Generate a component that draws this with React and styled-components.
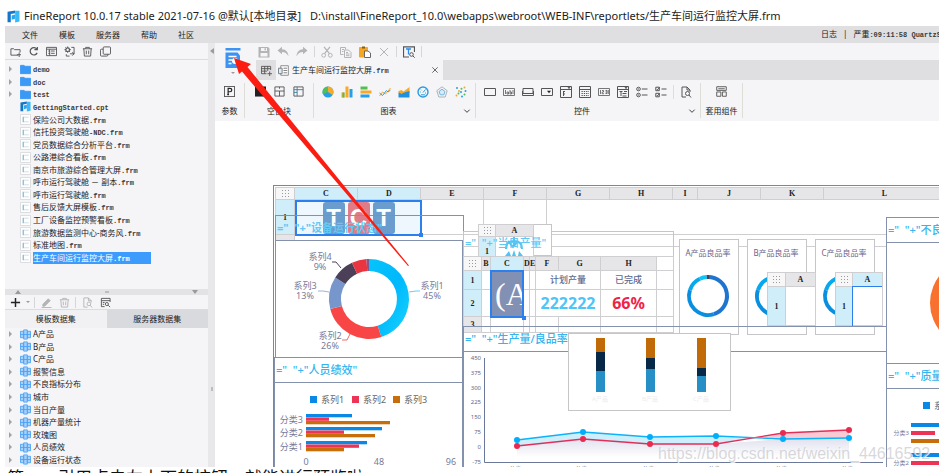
import React from "react";
import styled, { createGlobalStyle, css } from "styled-components";

const GlobalStyle = createGlobalStyle`
  * { box-sizing: border-box; }
  body { margin: 0; background: #fff; color: #222; font-family: "Noto Sans", "Noto Sans CJK SC", sans-serif; }
  button { border: 0; padding: 0; margin: 0; background: none; color: inherit; font: inherit; }
  ul { list-style: none; margin: 0; padding: 0; }
`;

/* ---------- frame ---------- */
const Page = styled.div`
  position: relative;
  display: flex;
  flex-direction: column;
  height: 100vh;
  overflow: hidden;
`;
const TitleBar = styled.header`
  display: flex;
  align-items: center;
  flex: none;
  height: 26px;
  padding: 6px 0 0 7px;
  font-size: 11px;
  line-height: 16px;
  color: #1c1c1c;
  white-space: nowrap;
`;
const AppName = styled.span`
  margin: 0 9px 0 4px;
`;
const MenuBar = styled.nav`
  display: flex;
  align-items: center;
  justify-content: space-between;
  flex: none;
  height: 17px;
  margin-left: 5px;
  padding-left: 17px;
  background: #dfdfe1;
  font-size: 8px;
  line-height: 12px;
  overflow: hidden;
`;
const MenuList = styled.div`
  display: flex;
  gap: 21px;
`;
const Status = styled.div`
  display: flex;
  gap: 6px;
  width: 118px;
  white-space: nowrap;
  overflow: hidden;
`;
const Body = styled.div`
  display: flex;
  flex: 1;
  min-height: 0;
  margin-left: 5px;
`;
const Caption = styled.p`
  flex: none;
  height: 6px;
  margin: 0;
  padding-left: 7px;
  overflow: hidden;
  font-size: 17px;
  line-height: 22px;
  color: #111;
  white-space: nowrap;
`;
const Mono = styled.span`
  font-family: "Liberation Mono", monospace;
  font-size: 7px;
  font-weight: 700;
  color: ${(p) => (p.$light ? "#fff" : "#3a3a3a")};
`;

/* ---------- sidebar ---------- */
const Sidebar = styled.aside`
  display: flex;
  flex-direction: column;
  flex: none;
  width: 203px;
  background: #f5f5f8;
  font-size: 8px;
  line-height: 12px;
`;
const SideTools = styled.div`
  display: flex;
  align-items: center;
  flex: none;
  gap: ${(p) => p.$gap || 6}px;
  height: ${(p) => p.$h}px;
  padding-left: 4px;
  border-bottom: 1px solid #dcdcdf;
  color: #444;
`;
const ToolButton = styled.button`
  display: flex;
  align-items: center;
  justify-content: center;
  flex: none;
  width: ${(p) => p.$w || 12}px;
  height: 14px;
  color: ${(p) => (p.$dim ? "#b4b4b6" : "#555")};
`;
const Tree = styled.ul`
  display: flex;
  flex-direction: column;
  flex: none;
  height: ${(p) => p.$h}px;
  margin-top: ${(p) => p.$top || 0}px;
`;
const TreeRow = styled.li`
  display: flex;
  align-items: center;
  flex: 1 1 0;
  min-height: 0;
  gap: 2px;
  padding-left: 4px;
  white-space: nowrap;
`;
const Twisty = styled.span`
  flex: none;
  width: 9px;
  height: 6px;
  &::before {
    content: "";
    display: block;
    width: 0;
    border: solid transparent;
    border-width: 3px 0 3px 3px;
    border-left-color: ${(p) => (p.$open ? "#a2a2a6" : "transparent")};
  }
`;
const TreeLabel = styled.span`
  flex: none;
  height: 12px;
  line-height: 12px;
  ${(p) =>
    p.$selected &&
    css`
      width: 118px;
      color: #fff;
      background: #3c9bfd;
    `}
`;
const SideSplit = styled.div`
  display: flex;
  align-items: center;
  justify-content: space-between;
  flex: none;
  height: 6px;
  margin-top: auto;
  padding: 0 10px;
  background: #e3e3e5;
`;
const Triangle = styled.span`
  width: 0;
  border: solid transparent;
  ${(p) => p.$dir === "up" && "border-width: 0 3px 4px; border-bottom-color: #9a9a9e;"}
  ${(p) => p.$dir === "down" && "border-width: 4px 3px 0; border-top-color: #9a9a9e;"}
  ${(p) => p.$dir === "drop" && "border-width: 2px 2px 0; border-top-color: #9a9a9e;"}
  ${(p) => p.$dir === "left" && "border-width: 3px 4px 3px 0; border-right-color: #9a9a9e;"}
`;
const Grip = styled.span`
  width: ${(p) => (p.$tall ? 2 : 4)}px;
  height: ${(p) => (p.$tall ? 4 : 2)}px;
  background: #bdbdc1;
`;
const DataTabs = styled.div`
  display: flex;
  flex: none;
  height: 18px;
`;
const DataTab = styled.button`
  flex: 1;
  background: ${(p) => (p.$active ? "#f1f1f3" : "#d9dadd")};
`;
const SideBottom = styled.div`
  flex: none;
  height: 172px;
`;
const Splitter = styled.div`
  display: flex;
  flex-direction: column;
  align-items: center;
  flex: none;
  width: 7px;
  padding: 5px 0 76px;
  justify-content: space-between;
  background: #e8e8ea;
`;

/* ---------- ribbon ---------- */
const Main = styled.main`
  display: flex;
  flex-direction: column;
  flex: 1;
  min-width: 0;
`;
const TopRow = styled.div`
  display: flex;
  flex: none;
  height: 37px;
  background: #f5f5f8;
`;
const PreviewButton = styled.button`
  display: flex;
  flex-direction: column;
  align-items: center;
  gap: 4px;
  width: 36px;
  padding-top: 5px;
`;
const TopColumn = styled.div`
  display: flex;
  flex-direction: column;
  flex: 1;
  min-width: 0;
`;
const QuickBar = styled.div`
  display: flex;
  align-items: center;
  height: 17px;
  gap: 5px;
  padding-left: 6px;
`;
const Rule = styled.span`
  flex: none;
  align-self: center;
  width: 1px;
  height: ${(p) => p.$h || 11}px;
  background: ${(p) => (p.$warm ? "#dfded6" : "#d6d6da")};
`;
const TabStrip = styled.div`
  display: flex;
  height: 20px;
  margin-left: 5px;
  background: #dfdfe1;
`;
const NewTab = styled.button`
  display: flex;
  align-items: center;
  justify-content: center;
  width: 20px;
`;
const FileTab = styled.div`
  display: flex;
  align-items: center;
  gap: 3px;
  width: 167px;
  padding: 0 4px 0 2px;
  background: #f5f5f8;
  font-size: 8px;
  line-height: 12px;
  white-space: nowrap;
`;
const CloseTab = styled.button`
  display: flex;
  margin-left: auto;
`;
const Ribbon = styled.div`
  display: flex;
  flex: none;
  height: 41px;
  padding-top: 3px;
  background: #f5f5f8;
  font-size: 8px;
  line-height: 12px;
`;
const Group = styled.section`
  display: grid;
  grid-template-rows: 17px 18px;
  align-items: center;
  align-content: start;
  flex: none;
  width: ${(p) => p.$w}px;
  height: 35px;
  border-right: 1px solid #dfded6;
`;
const GroupIcons = styled.div`
  display: flex;
  align-items: center;
  justify-content: center;
  gap: ${(p) => p.$gap || 5}px;
`;
const GroupFoot = styled.div`
  display: flex;
  align-items: center;
  padding-top: 4px;
  & > span {
    flex: 1;
    text-align: center;
    white-space: nowrap;
  }
  & > svg {
    flex: none;
    margin-right: 4px;
  }
`;

/* ---------- design canvas ---------- */
const Workspace = styled.div`
  display: flex;
  flex: 1;
  min-height: 0;
  padding: 64px 0 0 58px;
  background: #fff;
  overflow: hidden;
`;
const Stage = styled.div`
  position: relative;
  flex: 1;
  border: solid #3c93f8;
  border-width: 1px 0 0 1px;
  overflow: hidden;
`;
/* Widgets carry form coordinates; the form's own origin is 274 / 186. */
const Item = styled.div`
  position: absolute;
  left: ${(p) => p.$x - 274}px;
  top: ${(p) => p.$y - 186}px;
  width: ${(p) => p.$w}px;
  height: ${(p) => p.$h}px;
`;
const Frame = styled(Item)`
  border: 1px solid ${(p) => (p.$grey ? "#c6c6c8" : "#8391ad")};
  background: ${(p) => (p.$clear ? "transparent" : "#fff")};
`;
const WidgetTitle = styled(Item)`
  display: flex;
  align-items: center;
  padding-left: 1px;
  border: 1px solid #8391ad;
  background: ${(p) => (p.$clear ? "transparent" : "#fff")};
  color: ${(p) => (p.$pale ? "#62c8f4" : "#35b4ef")};
  font-size: 11px;
  font-weight: ${(p) => (p.$pale ? 700 : 500)};
  line-height: 16px;
  white-space: pre;
  overflow: hidden;
`;
const FloatText = styled(Item)`
  color: #5fc8f5;
  font-size: 11px;
  font-weight: 500;
  line-height: 16px;
  white-space: pre;
`;
const Chart = styled.svg`
  position: absolute;
  left: ${(p) => p.$x - 274}px;
  top: ${(p) => p.$y - 186}px;
  display: block;
  overflow: hidden;
  font-size: 9px;
`;
const SheetTable = styled.table`
  position: absolute;
  left: ${(p) => p.$x - 274}px;
  top: ${(p) => p.$y - 186}px;
  width: ${(p) => p.$w}px;
  table-layout: fixed;
  border-spacing: 0;
  border: solid #cfcfd1;
  border-width: 1px 0 0 1px;
  background: #fff;
  font-family: "Liberation Serif", serif;
  font-size: 8px;
  line-height: 9px;
  th, td {
    height: ${(p) => p.$head}px;
    padding: 0;
    border: solid #cfcfd1;
    border-width: 0 1px 1px 0;
    text-align: center;
  }
`;
const HeadCell = styled.th`
  background: ${(p) => (p.$active ? "#cfeefa" : p.$plain ? "#fff" : "#e6e6e8")};
`;
const CornerCell = styled.td`
  background: #f7f7f8;
  line-height: 0;
`;
const RowHead = styled.th`
  && { height: ${(p) => p.$h}px; }
  background: ${(p) => (p.$active ? "#cfeefa" : "#e6e6e8")};
`;
const Cell = styled.td`
  && {
    font-family: "Noto Sans", "Noto Sans CJK SC", sans-serif;
    font-size: ${(p) => p.$size || 9}px;
    font-weight: ${(p) => (p.$size ? 700 : 500)};
    line-height: 14px;
    color: ${(p) => p.$color || "#5d6a90"};
  }
`;
const Selection = styled(Item)`
  display: flex;
  align-items: center;
  justify-content: center;
  gap: 3px;
  border: 2px solid #2b80ee;
  background: ${(p) => p.$bg || "transparent"};
`;
const Handle = styled(Item)`
  background: #2b80ee;
`;
const LogoTile = styled.span`
  width: 22px;
  height: 32px;
  border-radius: 3px;
  background: ${(p) => (p.$red ? "#de7c88" : "#6a9ccd")};
  color: #fff;
  font: 700 24px/32px "Liberation Sans", sans-serif;
  text-align: center;
`;
const ImageGlyph = styled.span`
  align-self: center;
  margin-left: 3px;
  color: #fff;
  font: 32px/40px "Liberation Serif", serif;
`;
const ImageCell = styled(Selection)`
  justify-content: flex-start;
  background: #8290b4;
  overflow: hidden;
`;
const Watermark = styled(Item)`
  font: 16px/20px "Liberation Sans", sans-serif;
  color: rgba(190, 190, 196, 0.6);
  text-shadow: 1px 1px 0 rgba(255, 255, 255, 0.8);
  white-space: nowrap;
`;
const Annotation = styled.svg`
  position: absolute;
  left: 0;
  top: 0;
  pointer-events: none;
`;

/* ---------- icons ---------- */
const Svg = ({ s = 12, children, ...rest }) => (
  <svg width={s} height={s} viewBox="0 0 12 12" fill="none" stroke="currentColor" strokeWidth="1" aria-hidden="true" {...rest}>
    {children}
  </svg>
);
const icons = {
  newFolder: <><path d="M9 10H1V3h3l1 1h6v3" /><path d="M10 7v5M7.5 9.5H12" /></>,
  refresh: <path d="M9.6 3.4A4 4 0 1 0 10 7.5M10.2 1v3H7" strokeWidth="1.3" />,
  list: <><path d="M.5 1.5h11v9H.5zM.5 3.5h11M2.5 5.5h2M2.5 8h2M5.5 5.5h4M5.5 8h4M4 3.5v7" /></>,
  gearBox: <><circle cx="4" cy="4" r="2" strokeWidth="1.3" /><path d="M4 .5v1.500M4 6v1.500M.5 4H2M6 4h1.500M1.500 1.500l1 1M5.500 5.500l1 1M1.500 6.500l1-1M8 1.500h3v7M2.500 9v2H6M6.500 8.500h4.500M9 6.800l2 1.700-2 2" /></>,
  trash: <path d="M1 3h10M4 3V1.5h4V3M2 3l.6 8h6.800L10 3M4.700 5v4M7.300 5v4" />,
  copy: <><rect x="3.500" y="1" width="8" height="8" rx="1" /><path d="M3.500 3.500H1.500q-1 0-1 1v5.500q0 1 1 1h6q1 0 1-1V9" /></>,
  plus: <path d="M6 1v10M1 6h10" stroke="#222" strokeWidth="1.6" />,
  pencil: <path d="M2 8l6-6 2 2-6 6H2zM.5 11.500h11" fill="currentColor" />,
  docSearch: <><path d="M6 11H2V1h5l3 3v2M7 1v3h3" /><circle cx="7.500" cy="7.500" r="2" /><path d="M9 9l2 2.500" /></>,
  preview: <><path d="M5 10.500H1.500v-9h9.500v4M1.500 4h9.500M3 6h2M3 8h1.500" /><circle cx="7.500" cy="7.700" r="1.700" /><path d="M9 9l2 2" /></>,
  save: <path fill="currentColor" fillRule="evenodd" stroke="none" d="M1 1h9l1.500 1.500V11.500H.500V1zM3 2v3h6V2zM2.500 7v3.500h7V7zM6.500 2.300h1.500v2H6.500z" />,
  undo: <path fill="currentColor" stroke="none" d="M.500 4.500L5 .800V3.300c4 .2 6.200 3 6.500 7C10 7.500 8 6 5 6v2.300z" />,
  redo: <path fill="currentColor" stroke="none" d="M11.500 4.500L7 .800V3.300C3 3.500.800 6.300.500 10.300 2 7.500 4 6 7 6v2.300z" />,
  cut: <><circle cx="2.700" cy="9.300" r="1.900" /><circle cx="9.300" cy="9.300" r="1.900" /><path d="M3.500 7.600L9 .8M8.500 7.600L3 .8" strokeWidth="1.300" /></>,
  copyDocs: <><path d="M.5 1.500h5v2M.5 1.500v7h3M2 3.500h2M2 5.500h1.500" /><path d="M4.500 4h4l2.500 2.500V11.500H4.500zM6 6.500h2M6 8h3.500M6 9.700h3.500" /></>,
  paste: <><path d="M.5 1.500h8V5H5v6H.5z" fill="#f5a623" stroke="#f5a623" /><path d="M3 .500h3v2H3z" fill="#8a5a10" stroke="none" /><path d="M5.500 5h3.500l2.500 2v4.500h-6z" fill="#fff" stroke="#666" /></>,
  close: <path d="M2 2l8 8M10 2l-8 8" />,
  textView: <><path d="M6 11H.500V.800h11V6" stroke="#555" strokeWidth="1.200" /><path d="M3 3h5M5.500 3v5.500" stroke="#2a8ce8" strokeWidth="1.300" /><circle cx="8.500" cy="8.500" r="1.800" stroke="#555" /><path d="M10 10l1.700 1.700" stroke="#555" /></>,
  gridPlus: <path d="M.500 1.500h10v4M.500 1.500v8H6M.500 4h10M.500 6.700h6M4 1.500v8M7.300 1.500v5M9.500 7v5M7 9.500h5" stroke="#555" />,
  report: <><path d="M3 .800h8.300v10.400H3z" fill="#fff" stroke="#888" /><path d="M.500 3.500h4v6h-4z" fill="#d9ecfb" stroke="#777" /><path d="M6 3.500h4M6 6h4M6 8.500h4" stroke="#777" /></>,
  param: <><rect x=".500" y=".500" width="11" height="11" /><path d="M4.500 9.500v-7h2q2 0 2 1.900t-2 1.900h-2M3.500 9.500h2" stroke="#222" strokeWidth="1.300" /></>,
  black: <rect width="12" height="11" y=".500" fill="#222" stroke="none" />,
  split: <path d="M1 1h10v10H1zM1 5.500h10M6 5.500V11M6 1v2" />,
  table: <><path d="M1 1h10v10H1z" /><path d="M1 4h10M4.500 1v10M1 7h3.500" stroke="#3a7f9e" /></>,
  pie: <><circle cx="6" cy="6" r="5.500" fill="#23a0e8" stroke="none" /><path d="M6 6V.500a5.500 5.500 0 0 1 4.500 8.600z" fill="#f7a928" stroke="none" /><path d="M6 6L.900 8A5.500 5.500 0 0 1 6 .500z" fill="#52bf54" stroke="none" /></>,
  column: <g stroke="none"><path d="M.500 6.500h3v5h-3z" fill="#f7a928" /><path d="M4.500 .500h3v11h-3z" fill="#f7a928" /><path d="M1.500 6.500h2v5h-2z" fill="#52bf54" /><path d="M8.500 3h3v8.500h-3z" fill="#23a0e8" /></g>,
  barH: <g stroke="none"><path d="M.500 .500h7v3h-7z" fill="#52bf54" /><path d="M.500 4.500h11v3H.500z" fill="#f7a928" /><path d="M.500 8.500h9v3h-9z" fill="#23a0e8" /></g>,
  line: <><path d="M.500 10l3-4 3 2 5-6" stroke="#f7a928" /><path d="M.500 7l3 2.500 4-5 1.500 1.500L11.500 4" stroke="#23a0e8" /></>,
  area: <g stroke="none"><path d="M.500 5l3-1 2 1.500L11.500 1v6H.500z" fill="#f7a928" /><path d="M.500 11.500V6.500l3 1 3-1 5-1.500v6.500z" fill="#2190dc" /></g>,
  gauge: <><circle cx="6" cy="6" r="5" stroke="#2a9be0" strokeWidth="1.400" /><path d="M6 6.500L8.500 3.500M3 6h.800M9 7h-1M4 3.700l.6.600M4 8.800h4" stroke="#2a9be0" /></>,
  radar: <><path d="M6 .800l5.200 3.900-2 6.300H2.800l-2-6.300z" stroke="#a7b4bd" /><path d="M6 3.200l3 2.300-1.200 3.300H4.300L3 5.500z" stroke="#6fb5de" fill="#d6ebf7" /></>,
  scatter: <g stroke="none"><g fill="#23a0e8"><circle cx="2" cy="2" r="1" /><circle cx="6" cy="6" r="1" /><circle cx="10.500" cy="5" r="1" /><circle cx="7" cy="10.500" r="1" /></g><g fill="#f7a928"><circle cx="9.500" cy="1.500" r="1" /><circle cx="1.500" cy="9.500" r="1" /><circle cx="4" cy="5" r="1" /></g><g fill="#52bf54"><circle cx="3.500" cy="7.500" r="1" /><circle cx="9.500" cy="8.500" r="1" /><circle cx="6.500" cy="2.800" r="1" /></g></g>,
  box: <path d="M.500 2.500h11v7H.500z" />,
  label: <path d="M.500 2.500h11v7H.500zM2.500 4v4M4 8V6h1.500v2H4M7 4v4h1.500V6H7M10 4v4" strokeWidth=".800" />,
  button: <path d="M1 2.500h10v5H1zM.500 5v4.500h11V5" />,
  combo: <><path d="M.500 2.500h11v7H.500z" /><path d="M6 4.800h4L8 7.300z" fill="#222" stroke="none" /></>,
  tree: <><path d="M.500 .500h11v11H.500zM.500 3.500h11M3.500 5v5M3 5.500h2M3 8h2" /><path d="M7.500 1.300h3L9 3z" fill="#333" stroke="none" /></>,
  calendar: <><path d="M.500 .500h11v11H.500zM.500 3.500h11" /><path d="M2.500 5.500h7.500M2.500 7.500h7.500M2.500 9.500h7.500" strokeDasharray="1.300 1" /></>,
  number: <path d="M.500 2.500h11v7H.500zM2.500 4v4M4 4.500h1.500V6H4.200v1.700H6M7.500 4.500H9v3H7.500M7.500 6H9M10.300 4v4" strokeWidth=".800" />,
  dropTree: <><path d="M.500 .500h11v11H.500zM.500 3.500h11M2.500 5.500h3M4 5.500v4.500M5.500 7.500h4M5.500 10h4M7 5.500h3" /><path d="M7.500 1.300h3L9 3z" fill="#333" stroke="none" /></>,
  radios: <><circle cx="2.500" cy="3" r="1.800" /><circle cx="2.500" cy="9" r="1.800" /><path d="M2 3h1M2 9h1M5.800 3H11.500M5.800 9H11.500" /></>,
  checks: <path d="M.800 1.200h3.500v3.500H.800zM.800 7.300h3.500v3.500H.800zM1.800 3l.8.800 2-2.500M1.800 9l.8.800 2-2.500M6.500 3h5M6.500 9h5" />,
  blocks: <path d="M.800 .800h10.400v4H.800zM.800 6.500h4.500v4.700H.800zM7 6.500h4.200v4.700H7zM2.500 3h7" />,
  chevron: <path d="M2 4l4 4 4-4" strokeWidth="1.300" />,
  folder: <path d="M.500 1.500h4l1 1h6v8h-11z" fill="#3c98f5" stroke="#3c98f5" />,
  form: <><path d="M.500 .500h11v11H.500z" fill="#fff" stroke="#d9d9dc" /><path d="M3.500 3v6" stroke="#4da0c8" /><path d="M4.500 3.500h5M4.500 8.500h5" stroke="#c9dbe6" /></>,
  dataset: <><path d="M.500 2.500h3.500v7H.500zM8 2.500h3.500v7H8zM4 1h4v10H4z" fill="#a9d2fb" stroke="#4ea3f6" /><path d="M.500 6h11" stroke="#4ea3f6" /></>,
};
const Icon = ({ n, s }) => <Svg s={s}>{icons[n]}</Svg>;

const Logo = ({ s }) => (
  <svg width={s} height={s} viewBox="0 0 12 12" aria-hidden="true">
    <path d="M.5 1.500L7.500.500v2.500L3.500 3.800v7.400H.500z" fill="#1376c8" />
    <path d="M4.300 5l3.200-.8V8L4.300 9z" fill="#2aa6ea" />
    <path d="M7.500 .800h4v9.700l-4 1z" fill="#39b9f5" />
  </svg>
);
const PreviewIcon = () => (
  <svg width="16" height="20" viewBox="0 0 16 20" aria-hidden="true">
    <path d="M.500 0h15v2.500H.500z" fill="#3c93f2" />
    <path d="M.500 4.500h12l2.500 3V20H.500z" fill="#3c93f2" />
    <path d="M3.500 8.500h8M3.500 12h4M3.500 15.500h3" stroke="#fff" strokeWidth="1.300" />
    <circle cx="10" cy="13" r="3" fill="#fff" />
  </svg>
);

/* ---------- data ---------- */
const files = [
  { icon: "folder", latin: "demo", open: true },
  { icon: "folder", latin: "doc", open: true },
  { icon: "folder", latin: "test", open: true },
  { icon: "logo", latin: "GettingStarted.cpt" },
  { name: "保险公司大数据", latin: ".frm" },
  { name: "信托投资驾驶舱", latin: "-NDC.frm" },
  { name: "党员数据综合分析平台", latin: ".frm" },
  { name: "公路港综合看板", latin: ".frm" },
  { name: "南京市旅游综合管理大屏", latin: ".frm" },
  { name: "呼市运行驾驶舱 － 副本", latin: ".frm" },
  { name: "呼市运行驾驶舱", latin: ".frm" },
  { name: "售后反馈大屏模板", latin: ".frm" },
  { name: "工厂设备监控预警看板", latin: ".frm" },
  { name: "旅游数据监测中心-商务风", latin: ".frm" },
  { name: "标准地图", latin: ".frm" },
  { name: "生产车间运行监控大屏", latin: ".frm", selected: true },
];
const datasets = ["A产品", "B产品", "C产品", "报警信息", "不良指标分布", "城市", "当日产量", "机器产量统计", "玫瑰图", "人员绩效", "设备运行状态"];
const quick = [
  ["save", "保存"], ["undo", "撤销"], ["redo", "重做"], null,
  ["cut", "剪切"], ["copyDocs", "复制"], ["paste", "粘贴"], ["close", "删除"], null,
  ["textView", "查看"], null,
];
const chartIcons = ["pie", "column", "barH", "line", "area", "gauge", "radar", "scatter"];
const controlIcons = ["box", "label", "button", "combo", "tree", "calendar", "number", "dropTree", "radios", "checks"];

/* ---------- sheets ---------- */
const Dots = () => (
  <svg width="9" height="7" viewBox="0 0 9 7" fill="#9a9a9e" aria-hidden="true">
    {[0, 3, 6].map((x) => [0, 3, 6].map((y) => <rect key={x + "-" + y} x={x + 1} y={y} width="1" height="1" />))}
  </svg>
);
function Sheet({ x, y, corner, head, cols, rows }) {
  const width = corner + cols.reduce((sum, c) => sum + c.w, 0);
  return (
    <SheetTable $x={x} $y={y} $w={width} $head={head}>
      <colgroup>
        <col width={corner} />
        {cols.map((c, i) => <col key={i} width={c.w} />)}
      </colgroup>
      <thead>
        <tr>
          <CornerCell><Dots /></CornerCell>
          {cols.map((c, i) => <HeadCell key={i} $active={c.active} $plain={!c.label}>{c.label}</HeadCell>)}
        </tr>
      </thead>
      <tbody>
        {rows.map((r) => (
          <tr key={r.label}>
            <RowHead $h={r.h} $active={r.active}>{r.label}</RowHead>
            {(r.cells || cols.map(() => ({}))).map((c, i) => (
              <Cell key={i} colSpan={c.span} $size={c.size} $color={c.color}>{c.text}</Cell>
            ))}
          </tr>
        ))}
      </tbody>
    </SheetTable>
  );
}

/* ---------- charts ---------- */
const arc = (cx, cy, ro, ri, from, to) => {
  const pt = (r, a) => `${cx + r * Math.sin(a * 2 * Math.PI)} ${cy - r * Math.cos(a * 2 * Math.PI)}`;
  const big = to - from > 0.5 ? 1 : 0;
  return `M${pt(ro, from)}A${ro} ${ro} 0 ${big} 1 ${pt(ro, to)}L${pt(ri, to)}A${ri} ${ri} 0 ${big} 0 ${pt(ri, from)}Z`;
};
const ChartBox = ({ x, y, w, h, children }) => (
  <Chart $x={x} $y={y} width={w} height={h} viewBox={`${x} ${y} ${w} ${h}`}>{children}</Chart>
);
const donut = [
  [0, 0.45, "url(#cyanRing)"], [0.45, 0.71, "#f84646"], [0.71, 0.84, "#7797cc"],
  [0.84, 0.93, "#4c4059"], [0.93, 0.99, "#e93540"], [0.99, 1, "#7d5a96"],
];
const donutLabels = [
  [320, 260, "系列4", "9%"], [305, 289, "系列3", "13%"], [432, 289, "系列1", "45%"], [330, 339, "系列2", "26%"],
];
function DonutChart() {
  return (
    <ChartBox x={276} y={242} w={186} h={114}>
      <defs>
        <linearGradient id="cyanRing" x1="0" y1="0" x2="1" y2="1">
          <stop offset="0" stopColor="#06c4fb" /><stop offset="0.5" stopColor="#00b8fc" /><stop offset="1" stopColor="#18d4ff" />
        </linearGradient>
      </defs>
      {donut.map(([a, b, c]) => <path key={a} d={arc(369, 299, 40, 28, a, b)} fill={c} />)}
      <g fill="none">
        <path d="M341 268l-5-6h-4" stroke="#4c4059" />
        <path d="M329 292l-6-1h-5" stroke="#9db2da" />
        <path d="M409 292l7-1h4" stroke="#62cff5" />
        <path d="M350 334l-3 6h-5" stroke="#f26a6a" />
      </g>
      <g fill="#777b9b" textAnchor="middle">
        {donutLabels.map(([x, y, name, pct]) => (
          <React.Fragment key={name}><text x={x} y={y}>{name}</text><text x={x} y={y + 10}>{pct}</text></React.Fragment>
        ))}
      </g>
    </ChartBox>
  );
}
const series = ["#0a88e6", "#ee3455", "#c76d0a"];
const staff = [["分类3", 414, [46, 23, 84]], ["分类2", 427, [76, 38, 69]], ["分类1", 441, [61, 53, 38]]];
function StaffChart() {
  return (
    <ChartBox x={275} y={383} w={186} h={90}>
      {[310, 352, 393].map((x, i) => (
        <g key={x}>
          <rect x={x} y="396" width="7" height="7" fill={series[i]} />
          <text x={x + 11} y="403" fill="#666">{"系列" + (i + 1)}</text>
        </g>
      ))}
      {staff.map(([name, y, values]) => (
        <g key={name}>
          <text x="303" y={y + 9} textAnchor="end" fill="#777b9b">{name}</text>
          {values.map((v, i) => <rect key={i} x="306" y={y + i * 3.500} width={v} height="3.300" fill={series[i]} />)}
        </g>
      ))}
      <g fill="#777b9b" textAnchor="middle">
        <text x="306" y="465">0</text><text x="379" y="465">48</text><text x="451" y="465">96</text>
      </g>
    </ChartBox>
  );
}
const xs = [517, 583, 650, 716, 783, 849];
const blueY = [440, 432, 437, 436, 439, 438];
const redY = [446, 439, 444, 444, 433, 430];
const ticks = [450, 375, 300, 225, 150, 75, 0, -75];
const join = (ys) => xs.map((x, i) => `${x},${ys[i]}`).join(" ");
function OutputChart() {
  return (
    <ChartBox x={465} y={353} w={421} h={120}>
      <defs>
        <linearGradient id="fade" x1="0" y1="0" x2="0" y2="1">
          <stop offset="0" stopColor="#dfe0ee" /><stop offset="0.8" stopColor="#fff" />
        </linearGradient>
      </defs>
      <polygon points={`${join(redY.map((y, i) => Math.max(y, blueY[i])))} 849,462 517,462`} fill="url(#fade)" />
      <polygon points="517,440 583,432 650,437 716,436 751,438 716,444 650,444 583,439 517,446" fill="#cdeefb" />
      <polygon points="751,438 783,433 849,430 849,438 783,439" fill="#fbc9d3" />
      <g fill="none" strokeWidth="1.300">
        <polyline points={join(redY)} stroke="#e22f58" />
        <polyline points={join(blueY)} stroke="#0db2fb" />
      </g>
      {xs.map((x, i) => (
        <g key={x}>
          <circle cx={x} cy={redY[i]} r="3" fill="#ea2a50" /><circle cx={x} cy={blueY[i]} r="3" fill="#00aefb" />
        </g>
      ))}
      <path d="M484.500 358v104.500H883" fill="none" stroke="#6c7899" />
      <g fill="#5f6787" fontSize="6" textAnchor="end">
        {ticks.map((t, i) => <text key={t} x="481" y={360 + i * 14.800}>{t}</text>)}
      </g>
      <g fill="#5f6787" fontSize="6" textAnchor="middle">
        {xs.map((x, i) => <text key={x} x={x} y="471">{"分类" + (i + 1)}</text>)}
      </g>
    </ChartBox>
  );
}
const stacks = [[596, 338, 352, 371], [646, 338, 358, 369], [697, 338, 368, 376]];
function StackChart() {
  return (
    <ChartBox x={570} y={335} w={159} h={74}>
      {stacks.map(([x, a, b, c], i) => (
        <g key={x}>
          <rect x={x} y={a} width="9" height={b - a} fill="#c06b08" />
          <rect x={x} y={b} width="9" height={c - b} fill="#072846" />
          <rect x={x} y={c} width="9" height={392 - c} fill="#258fc6" />
          <text x={x + 4} y="401" fontSize="6" fill="#ececee" textAnchor="middle">{"ABC"[i] + "产品"}</text>
        </g>
      ))}
    </ChartBox>
  );
}
function GaugeCard({ x, name }) {
  const cx = x + 29;
  return (
    <>
      <Frame $x={x} $y={239} $w={60} $h={96} $grey />
      <ChartBox x={x + 1} y={241} w={57} h={92}>
        <text x={cx} y="256" fontSize="8" fill="#6d6288" textAnchor="middle">{name + "产品良品率"}</text>
        <path d={arc(cx, 296, 21, 17, 0, 0.45)} fill="#1f74cf" />
        <path d={arc(cx, 296, 21, 17, 0.45, 0.8)} fill="#0a8fe0" />
        <path d={arc(cx, 296, 21, 17, 0.8, 0.93)} fill="#08a8ee" />
        <path d={arc(cx, 296, 21, 17, 0.93, 0.99)} fill="#0cc6fa" />
        <path d={arc(cx, 296, 21, 17, 0.99, 1.01)} fill="#4c4059" />
      </ChartBox>
    </>
  );
}
function QualityChart() {
  const bars = [[423, 40, 0], [431, 24, 1], [439, 40, 2], [453, 40, 0], [461, 40, 1]];
  return (
    <ChartBox x={888} y={389} w={80} h={84}>
      <rect x="923" y="402" width="7" height="7" fill={series[0]} />
      <text x="934" y="409" fill="#666">系列1</text>
      {bars.map(([y, w, c]) => <rect key={y} x="911" y={y} width={w} height="4" fill={series[c]} />)}
      <g fontSize="6" fill="#777b9b" textAnchor="end">
        <text x="909" y="435">分类3</text><text x="909" y="465">分类2</text>
      </g>
    </ChartBox>
  );
}

const title = (name) => `="  "+"${name}"`;

function DesignForm() {
  return (
    <Workspace>
      <Stage>
        <Sheet
          x={275} y={187} corner={19} head={12}
          cols={[
            { label: "C", w: 63, active: true }, { label: "D", w: 63, active: true }, { label: "E", w: 63 }, { label: "F", w: 63 },
            { label: "G", w: 63 }, { label: "H", w: 63 }, { label: "I", w: 25 }, { label: "J", w: 63 }, { label: "K", w: 63 }, { label: "L", w: 122 },
          ]}
          rows={[
            { label: "1", h: 35, active: true, cells: [{ span: 2 }, {}, {}, { span: 6 }] },
            { label: "", h: 4, cells: [{ span: 10 }] },
          ]}
        />
        <Selection $x={295} $y={200} $w={127} $h={36} $bg="#eff7fe">
          <LogoTile>T</LogoTile><LogoTile $red>C</LogoTile><LogoTile>T</LogoTile>
        </Selection>
        <Handle $x={419} $y={233} $w={4} $h={4} />

        <WidgetTitle $x={275} $y={215} $w={189} $h={26} $clear $pale>{title("设备运行状态")}</WidgetTitle>
        <Frame $x={275} $y={240} $w={188} $h={118} />
        <DonutChart />
        <WidgetTitle $x={274} $y={357} $w={189} $h={26}>{title("人员绩效")}</WidgetTitle>
        <Frame $x={274} $y={382} $w={189} $h={100} />
        <StaffChart />

        <Frame $x={463} $y={231} $w={211} $h={26} $grey $clear />
        <Frame $x={532} $y={224} $w={20} $h={32} $grey />
        <Sheet x={478} y={224} corner={17} head={12} cols={[{ label: "A", w: 38 }]} rows={[{ label: "1", h: 30, active: true }]} />
        <ChartBox x={504} y={237} w={20} h={19}>
          <path d="M506 249q0-8 8-8t8 8M514 237v8M508 241l5 6 5-6" fill="none" stroke="#4dc4f4" strokeWidth="2" />
          <path d="M505 256l4-5 2 5zM512 256l2-6 2 6zM518 256l1-5 4 5z" fill="#4dc4f4" />
        </ChartBox>
        <FloatText $x={465} $y={235} $w={100} $h={16}>{title("当日产量")}</FloatText>

        <Sheet
          x={463} y={256} corner={18} head={14}
          cols={[
            { label: "B", w: 9 }, { label: "C", w: 33, active: true }, { label: "D", w: 6 }, { label: "E", w: 6 },
            { label: "F", w: 23 }, { label: "G", w: 42 }, { label: "H", w: 56 }, { label: "", w: 17 },
          ]}
          rows={[
            { label: "1", h: 19, active: true, cells: [{}, {}, {}, {}, { span: 2, text: "计划产量" }, { text: "已完成" }, {}] },
            { label: "2", h: 27, active: true, cells: [{}, {}, {}, {}, { span: 2, text: "222222", size: 16, color: "#4fc4f7" }, { text: "66%", size: 16, color: "#ef2349" }, {}] },
            { label: "3", h: 16 },
          ]}
        />
        <ImageCell $x={490} $y={270} $w={34} $h={48}><ImageGlyph>(A</ImageGlyph></ImageCell>
        <Handle $x={522} $y={316} $w={4} $h={4} />

        <GaugeCard x={679} name="A" />
        <GaugeCard x={747} name="B" />
        <GaugeCard x={815} name="C" />
        <Sheet x={767} y={272} corner={18} head={14} cols={[{ label: "A", w: 30 }]} rows={[{ label: "1", h: 39, active: true }]} />
        <Sheet x={835} y={272} corner={17} head={14} cols={[{ label: "A", w: 30, active: true }]} rows={[{ label: "1", h: 39, active: true }]} />
        <Handle $x={852} $y={286} $w={30} $h={1} />
        <Handle $x={852} $y={286} $w={1} $h={40} />

        <WidgetTitle $x={463} $y={326} $w={424} $h={26} $clear>{title("生产量/良品率")}</WidgetTitle>
        <Frame $x={463} $y={351} $w={424} $h={130} />
        <OutputChart />
        <Frame $x={568} $y={333} $w={163} $h={78} $grey />
        <StackChart />

        <WidgetTitle $x={886} $y={217} $w={120} $h={26}>{title("不良指标")}</WidgetTitle>
        <Frame $x={886} $y={242} $w={120} $h={122} />
        <ChartBox x={920} y={250} w={80} h={108}><circle cx="974" cy="303" r="44" fill="#f8712f" /></ChartBox>
        <WidgetTitle $x={886} $y={363} $w={120} $h={26}>{title("质量分析")}</WidgetTitle>
        <Frame $x={886} $y={388} $w={120} $h={100} />
        <QualityChart />
        <Watermark $x={658} $y={444} $w={281} $h={20}>https://blog.csdn.net/weixin_44616592</Watermark>
      </Stage>
    </Workspace>
  );
}

function FileTree() {
  return (
    <Tree $h={201} $top={3}>
      {files.map((f) => (
        <TreeRow key={(f.name || "") + f.latin}>
          <Twisty $open={f.open} />
          {f.icon === "logo" ? <Logo s={11} /> : <Icon n={f.icon || "form"} s={11} />}
          <TreeLabel $selected={f.selected}>{f.name}<Mono $light={f.selected}>{f.latin}</Mono></TreeLabel>
        </TreeRow>
      ))}
    </Tree>
  );
}

export default function App() {
  return (
    <Page>
      <GlobalStyle />
      <TitleBar>
        <Logo s={13} />
        <AppName>FineReport 10.0.17 stable 2021-07-16 @默认[本地目录]</AppName>
        <span>D:\install\FineReport_10.0\webapps\webroot\WEB-INF\reportlets/生产车间运行监控大屏.frm</span>
      </TitleBar>
      <MenuBar>
        <MenuList>
          {["文件", "模板", "服务器", "帮助", "社区"].map((m) => <button key={m}>{m}</button>)}
        </MenuList>
        <Status>
          <span>日志</span><span>|</span><span>严重<Mono>:09:11:58 QuartzScheduler</Mono></span>
        </Status>
      </MenuBar>
      <Body>
        <Sidebar>
          <SideTools $h={17}>
            {["newFolder", "refresh", "list", "gearBox", "trash", "copy"].map((n) => (
              <ToolButton key={n} aria-label={n}><Icon n={n} s={11} /></ToolButton>
            ))}
          </SideTools>
          <FileTree />
          <SideSplit><Triangle $dir="up" /><Grip /><Triangle $dir="down" /></SideSplit>
          <SideBottom>
            <SideTools $h={15} $gap={4}>
              <ToolButton aria-label="add"><Icon n="plus" s={11} /></ToolButton>
              <ToolButton $w={5} aria-label="add menu"><Triangle $dir="drop" /></ToolButton>
              <Rule />
              <ToolButton $w={14} $dim aria-label="edit"><Icon n="pencil" s={11} /></ToolButton>
              <ToolButton $w={14} $dim aria-label="delete"><Icon n="trash" s={11} /></ToolButton>
              <Rule />
              <ToolButton $w={14} $dim aria-label="search"><Icon n="docSearch" s={11} /></ToolButton>
              <ToolButton $w={14} aria-label="preview data"><Icon n="preview" s={11} /></ToolButton>
            </SideTools>
            <DataTabs>
              <DataTab $active>模板数据集</DataTab>
              <DataTab>服务器数据集</DataTab>
            </DataTabs>
            <Tree $h={138}>
              {datasets.map((d) => (
                <TreeRow key={d}><Twisty $open /><Icon n="dataset" s={11} /><TreeLabel>{d}</TreeLabel></TreeRow>
              ))}
            </Tree>
          </SideBottom>
        </Sidebar>
        <Splitter><Triangle $dir="left" /><Grip $tall /></Splitter>
        <Main>
          <TopRow>
            <PreviewButton aria-label="预览"><PreviewIcon /><Triangle $dir="drop" /></PreviewButton>
            <TopColumn>
              <QuickBar>
                {quick.map((q, i) => q
                  ? <ToolButton key={i} $w={14} $dim aria-label={q[1]}><Icon n={q[0]} /></ToolButton>
                  : <Rule key={i} />)}
              </QuickBar>
              <TabStrip>
                <NewTab aria-label="新建"><Icon n="gridPlus" s={11} /></NewTab>
                <FileTab>
                  <Icon n="report" s={11} />
                  <span>生产车间运行监控大屏<Mono>.frm</Mono></span>
                  <CloseTab aria-label="关闭"><Icon n="close" s={8} /></CloseTab>
                </FileTab>
              </TabStrip>
            </TopColumn>
          </TopRow>
          <Ribbon>
            <Group $w={30}>
              <GroupIcons><ToolButton aria-label="参数"><Icon n="param" s={11} /></ToolButton></GroupIcons>
              <GroupFoot><span>参数</span></GroupFoot>
            </Group>
            <Group $w={69}>
              <GroupIcons $gap={7}>{["black", "split", "table"].map((n) => <ToolButton key={n} aria-label={n}><Icon n={n} s={11} /></ToolButton>)}</GroupIcons>
              <GroupFoot><span>空白块</span></GroupFoot>
            </Group>
            <Group $w={162}>
              <GroupIcons>{chartIcons.map((n) => <ToolButton key={n} $w={14} aria-label={n}><Icon n={n} /></ToolButton>)}</GroupIcons>
              <GroupFoot><span>图表</span><Icon n="chevron" s={8} /></GroupFoot>
            </Group>
            <Group $w={225}>
              <GroupIcons>
                {controlIcons.map((n) => <ToolButton key={n} $w={14} aria-label={n}><Icon n={n} /></ToolButton>)}
                <Rule $warm $h={14} />
                <ToolButton $w={14} aria-label="search"><Icon n="docSearch" /></ToolButton>
              </GroupIcons>
              <GroupFoot><span>控件</span><Icon n="chevron" s={8} /></GroupFoot>
            </Group>
            <Group $w={42}>
              <GroupIcons><ToolButton aria-label="套用组件"><Icon n="blocks" s={11} /></ToolButton></GroupIcons>
              <GroupFoot><span>套用组件</span></GroupFoot>
            </Group>
          </Ribbon>
          <DesignForm />
        </Main>
      </Body>
      <Caption>第一，引用点击左上面的按钮，就能进行预览啦</Caption>
      <Annotation width="420" height="280" viewBox="0 0 420 280" aria-hidden="true">
        <path d="M234 58L251 64L247.500 67L409 265.500L408 266L242 71.500L239 74z" fill="#fb1d12" />
      </Annotation>
    </Page>
  );
}
